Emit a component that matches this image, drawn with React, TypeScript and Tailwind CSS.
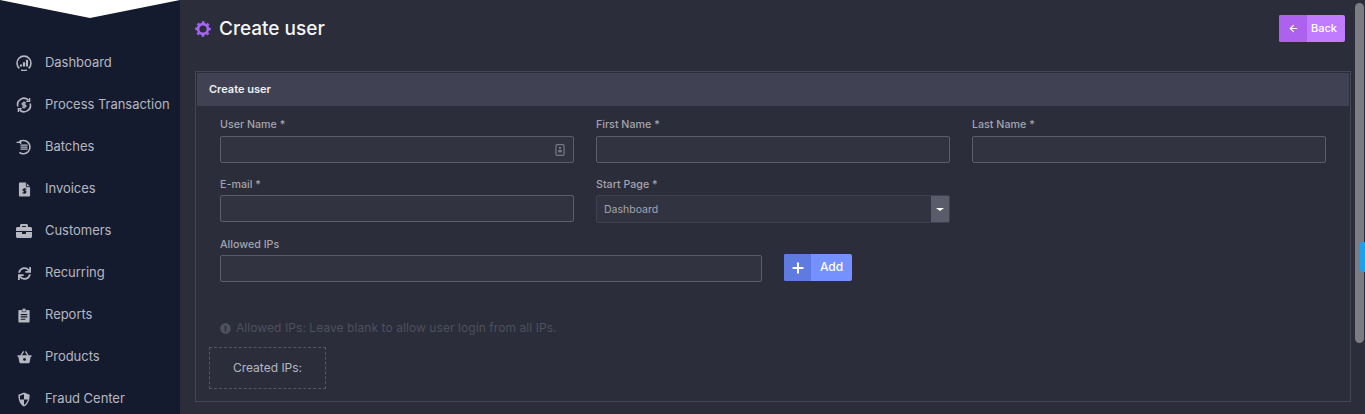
import { ArrowLeft, Plus } from 'lucide-react';
import { FaBriefcase, FaExclamationCircle, FaSync } from 'react-icons/fa';

const font = { fontFamily: 'Inter, "Liberation Sans", sans-serif' };

function GearIcon() {
  return (
    <svg viewBox="0 0 16 16" className="w-4 h-4" fill="none" stroke="#a566f0">
      <circle cx="8" cy="8" r="4.9" strokeWidth="2.6" />
      <circle cx="8" cy="8" r="6.9" strokeWidth="1.8" strokeDasharray="2.7 2.72" strokeDashoffset="1.35" />
    </svg>
  );
}

function DashboardIcon() {
  return (
    <svg viewBox="0 0 16 16" className="w-4 h-4" fill="none" stroke="currentColor">
      <path d="M3.4 13.4A7 7 0 1 1 12.6 13.4" strokeWidth="1.6" />
      <path d="M5.2 15a7.4 7.4 0 0 0 5.6 0" strokeWidth="1.5" />
      <path d="M5 11.5V9.5M8 11.5V7.2M11 11.5V4.8" strokeWidth="2.2" />
    </svg>
  );
}

function ProcessIcon() {
  return (
    <svg viewBox="0 0 16 16" className="w-4 h-4" fill="none" stroke="currentColor">
      <path d="M1.9 9.5A6.3 6.3 0 0 1 12.6 3.4" strokeWidth="1.6" />
      <path d="M14.1 6.5A6.3 6.3 0 0 1 3.4 12.6" strokeWidth="1.6" />
      <path d="M13.6 1v3.4h-3.4M2.4 15v-3.4h3.4" strokeWidth="1.4" />
      <path d="M10 5.8H7.2a1.1 1.1 0 0 0 0 2.2h1.6a1.1 1.1 0 0 1 0 2.2H6M8 4.4v7.2" strokeWidth="1.3" />
    </svg>
  );
}

function BatchesIcon() {
  return (
    <svg viewBox="0 0 16 16" className="w-4 h-4" fill="none" stroke="currentColor">
      <path d="M3 3.2A6.6 6.6 0 1 1 3.4 13.4" strokeWidth="1.6" />
      <path d="M0.5 3.4h4.5M4.6 1v4" strokeWidth="1.4" />
      <path d="M4.5 6.2h7M4.5 8.2h7M4.5 10.2h7" strokeWidth="1.3" />
    </svg>
  );
}

function InvoiceIcon() {
  return (
    <svg viewBox="0 0 14 16" className="w-[13px] h-[15px]">
      <path d="M1 1.5A1 1 0 0 1 2 .5h6.5L13 5v9.5a1 1 0 0 1-1 1H2a1 1 0 0 1-1-1Z" fill="currentColor" />
      <path d="M9 .5V5h4" fill="none" stroke="#151b2e" strokeWidth="1" />
      <path d="M9 7.6H6.4a1 1 0 0 0 0 2h1.2a1 1 0 0 1 0 2H5M7 6.6v6" fill="none" stroke="#151b2e" strokeWidth="1.2" />
    </svg>
  );
}

function ClipboardIcon() {
  return (
    <svg viewBox="0 0 14 16" className="w-[14px] h-[15px]">
      <path d="M2 2.2h10a1 1 0 0 1 1 1v11.3a1 1 0 0 1-1 1H2a1 1 0 0 1-1-1V3.200a1 1 0 0 1 1-1Z" fill="currentColor" />
      <path d="M5 1.400a2 1.200 0 0 1 4 0V4H5Z" fill="currentColor" stroke="#151b2e" strokeWidth="0.6" />
      <path d="M3.500 7h7M3.500 9.500h7M3.500 12h5" fill="none" stroke="#151b2e" strokeWidth="1.200" />
    </svg>
  );
}

function BasketIcon() {
  return (
    <svg viewBox="0 0 16 14" className="w-[15px] h-[14px]">
      <path d="M4.2 5.5 7 1M11.8 5.5 9 1" fill="none" stroke="currentColor" strokeWidth="1.4" />
      <path d="M.5 5h15v1.6h-.9l-1.2 6.2a1 1 0 0 1-1 .8H3.600a1 1 0 0 1-1-.8L1.400 6.600H.5Z" fill="currentColor" />
      <circle cx="8" cy="9.600" r="1.500" fill="#151b2e" />
    </svg>
  );
}

function ShieldIcon() {
  return (
    <svg viewBox="0 0 14 16" className="w-[14px] h-[15px]">
      <path d="M7 .5 13 2.800C13 8.500 11.500 13 7 15.500 2.500 13 1 8.500 1 2.800Z" fill="currentColor" />
      <path d="M7 2.400 2.700 4.100V8H7ZM7 8H11.100C10.600 10.400 9.400 12.400 7 13.800Z" fill="#151b2e" />
    </svg>
  );
}

function ContactIcon() {
  return (
    <svg viewBox="0 0 10 12" className="w-2.5 h-3" fill="none" stroke="#777884">
      <rect x="1" y="0.7" width="8" height="10.6" rx="1" strokeWidth="1.2" />
      <rect x="4" y="3" width="2" height="2" fill="#777884" stroke="none" />
      <rect x="3.2" y="6" width="3.6" height="2.4" fill="#777884" stroke="none" />
    </svg>
  );
}

const navItems = [
  { label: 'Dashboard', icon: <DashboardIcon /> },
  { label: 'Process Transaction', icon: <ProcessIcon /> },
  { label: 'Batches', icon: <BatchesIcon /> },
  { label: 'Invoices', icon: <InvoiceIcon /> },
  { label: 'Customers', icon: <FaBriefcase className="w-4 h-4" /> },
  { label: 'Recurring', icon: <FaSync className="w-[13px] h-[13px]" /> },
  { label: 'Reports', icon: <ClipboardIcon /> },
  { label: 'Products', icon: <BasketIcon /> },
  { label: 'Fraud Center', icon: <ShieldIcon /> },
];

function Field({ label, first, children }: { label: string; first?: boolean; children?: React.ReactNode }) {
  return (
    <div className="flex flex-col">
      <label className={`h-[14px] text-[10.7px] leading-[16px] font-medium text-[#a3a4ad] ${first ? 'mb-[5px]' : 'mb-1'}`}>
        {label}
      </label>
      {children ?? <TextInput />}
    </div>
  );
}

function TextInput({ icon }: { icon?: boolean }) {
  return (
    <div className="h-[27px] flex items-center justify-end pr-2 rounded-[2px] border border-[#5c5d6b] bg-[#323341]">
      {icon && <ContactIcon />}
    </div>
  );
}

export default function App() {
  return (
    <div className="relative flex h-[414px] overflow-hidden bg-[#2b2d3b]" style={font}>
      {/* Sidebar */}
      <aside className="w-[180px] shrink-0 bg-[#151b2e]">
        <svg viewBox="0 0 180 18" className="w-[180px] h-[18px] block">
          <polygon points="0,0 180,0 90,18" fill="#ffffff" />
        </svg>
        <nav className="pt-6">
          {navItems.map((item) => (
            <div key={item.label} className="h-[42px] flex items-center text-[#b5b7c1]">
              <span className="w-[16px] ml-4 flex justify-center">{item.icon}</span>
              <span className="ml-[13px] text-[13px] tracking-[-0.03px] whitespace-nowrap">{item.label}</span>
            </div>
          ))}
        </nav>
      </aside>

      {/* Main */}
      <main className="flex-1 min-w-0 pl-[15px] pr-[14px]">
        <div className="h-[71px] flex items-start justify-between">
          <div className="flex items-center gap-2 pt-[15px] h-[43px]">
            <GearIcon />
            <h1 className="text-[19px] font-medium text-[#f4f4f6]">Create user</h1>
          </div>
          <button className="mt-[15px] mr-[6px] h-[27px] w-[66px] flex rounded-[2px] overflow-hidden bg-[#c17bff] text-white text-[11px] font-medium">
            <span className="w-[28px] h-full flex items-center justify-center bg-[#ac62ee]">
              <ArrowLeft className="w-[11px] h-[11px]" strokeWidth={2.5} />
            </span>
            <span className="flex-1 h-full flex items-center pl-1">Back</span>
          </button>
        </div>

        <section className="h-[331px] border border-[#454654] p-px">
          <div className="h-[33px] flex items-center pl-3 bg-[#404152] text-[11px] font-semibold text-[#f0f0f3]">
            Create user
          </div>

          <div className="px-[23px] pt-[11px]">
            <div className="grid grid-cols-3 gap-[22px] gap-y-[14px] w-[1106px]">
              <Field label="User Name *" first>
                <TextInput icon />
              </Field>
              <Field label="First Name *" first />
              <Field label="Last Name *" first />
              <Field label="E-mail *" />
              <Field label="Start Page *">
                <div className="h-[28px] flex items-center justify-between rounded-[2px] border border-[#3f4150] bg-[#323341]">
                  <span className="pl-[7px] pt-px text-[10.5px] text-[#a3a4ad]">Dashboard</span>
                  <span className="w-[18px] h-full flex items-center justify-center bg-[#5b5c6b]">
                    <span className="border-x-[4px] border-t-[3px] border-x-transparent border-t-white" />
                  </span>
                </div>
              </Field>
            </div>

            <div className="mt-[14px] flex items-end gap-[22px]">
              <div className="w-[542px]">
                <Field label="Allowed IPs" />
              </div>
              <button className="mb-px h-[27px] w-[68px] flex rounded-[2px] overflow-hidden bg-[#7591ff] text-white text-[12px] font-medium">
                <span className="w-[27px] h-full flex items-center justify-center bg-[#5f7ae0]">
                  <Plus className="w-4 h-4" strokeWidth={3} />
                </span>
                <span className="flex-1 h-full flex items-center justify-center pb-px">Add</span>
              </button>
            </div>

            <p className="mt-[37px] flex items-center gap-[5px] text-[12px] tracking-[0.07px] text-[#4e505e]">
              <FaExclamationCircle className="w-[11px] h-[11px]" />
              Allowed IPs: Leave blank to allow user login from all IPs.
            </p>
          </div>

          <div className="ml-3 mt-[10px] w-[117px] h-[42px] flex items-center justify-center border border-dashed border-[#545664] text-[12px] text-[#b5b7c1]">
            Created IPs:
          </div>
        </section>
      </main>

      {/* Scrollbar and the small tab lying over it */}
      <div className="absolute right-[1px] top-[3px] w-[9px] h-[340px] rounded-full bg-[#7c7c82]" />
      <div className="absolute right-0 top-[242px] w-[5px] h-[30px] rounded-l-[3px] bg-[#1ba1ee]" />
    </div>
  );
}
